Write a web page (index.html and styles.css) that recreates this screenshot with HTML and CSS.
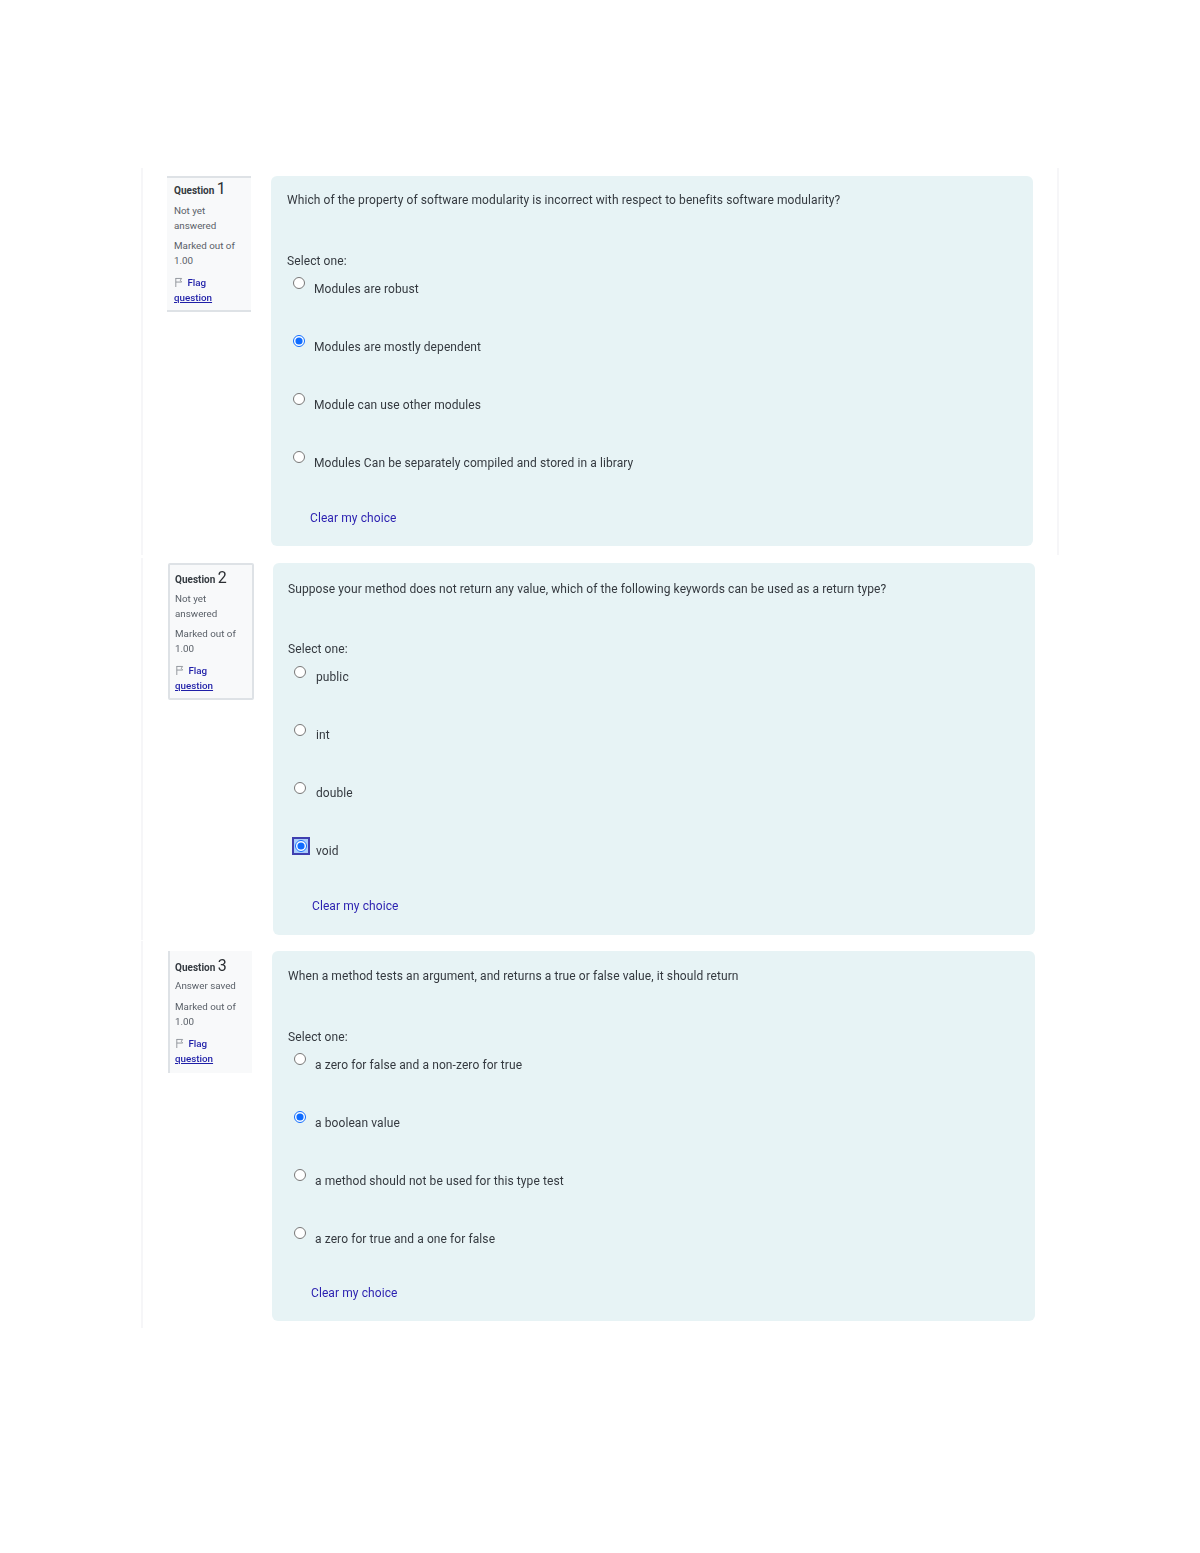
FILE: index.html
```html
<!DOCTYPE html>
<html lang="en">
<head>
    <meta charset="UTF-8">
    <meta name="viewport" content="width=device-width, initial-scale=1.0">
    <title>Quiz</title>
    <link rel="stylesheet" href="styles.css">
</head>
<body>
    <div class="page">
        <div class="question q1">
            <div class="info">
                <div class="qno">Question <span>1</span></div>
                <div class="state">Not yet answered</div>
                <div class="grade">Marked out of 1.00</div>
                <div class="flag">
                    <svg viewBox="0 0 10 12"><path d="M2 1v10M2 1.500h6.500L7 3.500l1.500 2H2" /></svg>
                    <a href="#">Flag <span>question</span></a>
                </div>
            </div>
            <div class="content">
                <p class="qtext">Which of the property of software modularity is incorrect with respect to benefits software modularity?</p>
                <p class="prompt">Select one:</p>
                <label class="answer"><input type="radio" name="q1"><span>Modules are robust</span></label>
                <label class="answer"><input type="radio" name="q1" checked><span>Modules are mostly dependent</span></label>
                <label class="answer"><input type="radio" name="q1"><span>Module can use other modules</span></label>
                <label class="answer"><input type="radio" name="q1"><span>Modules Can be separately compiled and stored in a library</span></label>
                <a class="clear" href="#">Clear my choice</a>
            </div>
        </div>

        <div class="question q2">
            <div class="info">
                <div class="qno">Question <span>2</span></div>
                <div class="state">Not yet answered</div>
                <div class="grade">Marked out of 1.00</div>
                <div class="flag">
                    <svg viewBox="0 0 10 12"><path d="M2 1v10M2 1.500h6.500L7 3.500l1.500 2H2" /></svg>
                    <a href="#">Flag <span>question</span></a>
                </div>
            </div>
            <div class="content">
                <p class="qtext">Suppose your method does not return any value, which of the following keywords can be used as a return type?</p>
                <p class="prompt">Select one:</p>
                <label class="answer"><input type="radio" name="q2"><span>public</span></label>
                <label class="answer"><input type="radio" name="q2"><span>int</span></label>
                <label class="answer"><input type="radio" name="q2"><span>double</span></label>
                <label class="answer focused"><i class="focus-box"><input type="radio" name="q2" checked></i><span>void</span></label>
                <a class="clear" href="#">Clear my choice</a>
            </div>
        </div>

        <div class="question q3">
            <div class="info">
                <div class="qno">Question <span>3</span></div>
                <div class="state">Answer saved</div>
                <div class="grade">Marked out of 1.00</div>
                <div class="flag">
                    <svg viewBox="0 0 10 12"><path d="M2 1v10M2 1.500h6.500L7 3.500l1.500 2H2" /></svg>
                    <a href="#">Flag <span>question</span></a>
                </div>
            </div>
            <div class="content">
                <p class="qtext">When a method tests an argument, and returns a true or false value, it should return</p>
                <p class="prompt">Select one:</p>
                <label class="answer"><input type="radio" name="q3"><span>a zero for false and a non-zero for true</span></label>
                <label class="answer"><input type="radio" name="q3" checked><span>a boolean value</span></label>
                <label class="answer"><input type="radio" name="q3"><span>a method should not be used for this type test</span></label>
                <label class="answer"><input type="radio" name="q3"><span>a zero for true and a one for false</span></label>
                <a class="clear" href="#">Clear my choice</a>
            </div>
        </div>
    </div>
</body>
</html>
```

FILE: styles.css
```css
html, body {
    margin: 0;
    padding: 0;
    background-color: #ffffff;
}

body {
    font-family: Roboto, "Liberation Sans", sans-serif;
    font-size: 12px;
    line-height: 15px;
    color: #34393f;
}

.page {
    width: 918px;
    height: 1553px;
    margin-left: 141px;
    padding-top: 168px;
    box-sizing: border-box;
    filter: blur(0.7px);
}

.question {
    display: flex;
    align-items: flex-start;
    border-left: 2px solid #f6f6f8;
    box-sizing: border-box;
}

.q1 {
    height: 387px;
    padding: 8px 0 0 24px;
    border-right: 2px solid #f6f6f8;
    margin-bottom: 3px;
}

.q2 {
    height: 382px;
    padding: 5px 0 0 25px;
    margin-bottom: 1px;
}

.q3 {
    height: 387px;
    padding: 10px 0 0 25px;
}

.info {
    width: 84px;
    flex-shrink: 0;
    box-sizing: border-box;
    padding: 2px 6px 6px 7px;
    background-color: #f8f9fa;
    font-size: 9.800px;
    color: #5a6068;
}

.q1 .info {
    border-top: 2px solid #dee2e6;
    border-bottom: 2px solid #dee2e6;
    height: 136px;
    margin-right: 20px;
}

.q2 .info {
    width: 86px;
    height: 137px;
    border: 2px solid #dee2e6;
    border-radius: 2px;
    padding: 4px 6px 6px 5px;
    margin-right: 19px;
}

.q3 .info {
    height: 122px;
    border-left: 2px solid #dee2e6;
    padding: 6px 6px 6px 5px;
    margin-right: 20px;
}

.qno {
    font-size: 10px;
    font-weight: 700;
    color: #343a40;
    line-height: 17px;
}

.qno span {
    font-size: 16px;
    font-weight: 400;
    color: #2b2f33;
}

.state {
    margin-top: 4px;
}

.q2 .state {
    margin-top: 3px;
}

.grade {
    margin-top: 5px;
}

.q3 .state {
    margin-top: 2px;
}

.q3 .grade {
    margin-top: 6px;
}

.flag {
    margin-top: 7px;
}

.flag svg {
    width: 9px;
    height: 11px;
    margin-right: 2px;
    vertical-align: -2px;
}

.flag path {
    fill: none;
    stroke: #8b9096;
    stroke-width: 1;
}

.flag a {
    color: #1f1fa8;
    font-weight: 500;
    text-decoration: none;
}

.flag a span {
    display: block;
    text-decoration: underline;
}

.content {
    width: 762px;
    height: 370px;
    flex-shrink: 0;
    box-sizing: border-box;
    padding: 17px 0 0 16px;
    background-color: #e7f3f5;
    border-radius: 6px;
    letter-spacing: 0.09px;
}

.q2 .content {
    height: 372px;
    padding: 19px 0 0 15px;
}

.q3 .content {
    width: 763px;
    padding-top: 18px;
}

.qtext {
    margin: 0;
    line-height: 15px;
}

.prompt {
    margin: 46px 0 0;
    line-height: 15px;
}

.q2 .prompt {
    margin-top: 45px;
}

.answer {
    display: flex;
    align-items: flex-start;
    height: 58px;
    padding-left: 6px;
}

.answer input {
    width: 12px;
    height: 12px;
    margin: 8px 0 0;
    flex-shrink: 0;
    accent-color: #0f6cff;
}

.answer span {
    margin: 13px 0 0 9px;
}

.q2 .answer input {
    margin-top: 9px;
}

.q2 .answer span {
    margin: 13px 0 0 10px;
}

.q2 .focused {
    padding-left: 4px;
}

.focus-box {
    display: flex;
    flex-shrink: 0;
    margin-top: 6px;
    padding: 1px;
    border: 2px solid #3f3fb0;
    background-color: #a9cdfb;
}

.q2 .focus-box input {
    margin: 0;
}

.q2 .focused span {
    margin-left: 6px;
}

.clear {
    display: block;
    margin: 10px 0 0 23px;
    color: #2a1fb0;
    text-decoration: none;
}

.q2 .clear {
    margin-left: 24px;
}

.q3 .clear {
    margin-top: 9px;
}
```
